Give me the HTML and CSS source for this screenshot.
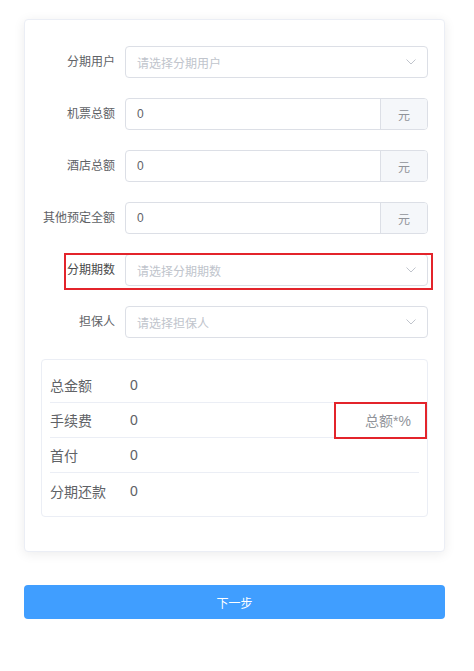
FILE: index.html
```html
<!DOCTYPE html>
<html lang="zh">
<head>
<meta charset="utf-8">
<title>分期</title>
<link rel="stylesheet" href="styles.css">
</head>
<body>
<div class="page">
  <div class="card">
    <div class="form">
      <div class="form-item">
        <label class="label">分期用户</label>
        <div class="select">
          <span class="placeholder">请选择分期用户</span>
          <svg class="arrow" width="10" height="6" viewBox="0 0 10 6"><polyline points="0.5,0.5 5,5 9.5,0.5" fill="none" stroke="#c0c4cc" stroke-width="1"/></svg>
        </div>
      </div>
      <div class="form-item">
        <label class="label">机票总额</label>
        <div class="input-group">
          <span class="value">0</span>
          <span class="append">元</span>
        </div>
      </div>
      <div class="form-item">
        <label class="label">酒店总额</label>
        <div class="input-group">
          <span class="value">0</span>
          <span class="append">元</span>
        </div>
      </div>
      <div class="form-item">
        <label class="label">其他预定全额</label>
        <div class="input-group">
          <span class="value">0</span>
          <span class="append">元</span>
        </div>
      </div>
      <div class="form-item">
        <label class="label label-dark">分期期数</label>
        <div class="select">
          <span class="placeholder">请选择分期期数</span>
          <svg class="arrow" width="10" height="6" viewBox="0 0 10 6"><polyline points="0.5,0.5 5,5 9.5,0.5" fill="none" stroke="#c0c4cc" stroke-width="1"/></svg>
        </div>
        <div class="mark mark-form"></div>
      </div>
      <div class="form-item">
        <label class="label">担保人</label>
        <div class="select">
          <span class="placeholder">请选择担保人</span>
          <svg class="arrow" width="10" height="6" viewBox="0 0 10 6"><polyline points="0.5,0.5 5,5 9.5,0.5" fill="none" stroke="#c0c4cc" stroke-width="1"/></svg>
        </div>
      </div>
    </div>
    <div class="summary">
      <div class="row">
        <span class="s-label">总金额</span>
        <span class="s-value">0</span>
      </div>
      <div class="row">
        <span class="s-label">手续费</span>
        <span class="s-value">0</span>
        <span class="s-note">总额*%</span>
        <div class="mark mark-note"></div>
      </div>
      <div class="row">
        <span class="s-label">首付</span>
        <span class="s-value">0</span>
      </div>
      <div class="row">
        <span class="s-label">分期还款</span>
        <span class="s-value">0</span>
      </div>
    </div>
  </div>
  <button class="btn">下一步</button>
</div>
</body>
</html>
```

FILE: styles.css
```css
* { box-sizing: border-box; }
html, body { margin: 0; padding: 0; background: #fff; }
body {
  font-family: "Liberation Sans", "Noto Sans CJK SC", sans-serif;
  color: #606266;
}
.page {
  padding: 19px 29px 0 24px;
}
.card {
  border: 1px solid #ebeef5;
  border-radius: 4px;
  background: #fff;
  box-shadow: 0 2px 12px 0 rgba(0, 0, 0, 0.08);
  padding: 26px 16px 34px 16px;
}
.form {
  display: flex;
  flex-direction: column;
  gap: 20px;
}
.form-item {
  position: relative;
  display: flex;
  align-items: center;
  height: 32px;
}
.label {
  width: 84px;
  flex: none;
  text-align: right;
  padding-right: 10px;
  font-size: 12px;
  color: #606266;
  line-height: 32px;
  white-space: nowrap;
}
.label-dark { color: #4a4a4a; }
.select, .input-group {
  flex: 1;
  height: 32px;
  border: 1px solid #dcdfe6;
  border-radius: 4px;
  display: flex;
  align-items: center;
  font-size: 12px;
  overflow: hidden;
}
.select {
  padding: 0 11px 0 11px;
  justify-content: space-between;
}
.placeholder { color: #c0c4cc; }
.value {
  flex: 1;
  padding-left: 11px;
  color: #606266;
}
.append {
  width: 47px;
  height: 100%;
  background: #f5f7fa;
  border-left: 1px solid #dcdfe6;
  color: #909399;
  display: flex;
  align-items: center;
  justify-content: center;
}
.mark {
  position: absolute;
  border: 2px solid #e3242b;
  pointer-events: none;
}
.mark-form {
  top: -1px;
  left: 23px;
  right: -5px;
  height: 37px;
}
.summary {
  margin-top: 21px;
  border: 1px solid #ebeef5;
  border-radius: 4px;
  padding: 8px;
}
.row {
  position: relative;
  display: flex;
  align-items: center;
  height: 35px;
  border-bottom: 1px solid #ebeef5;
  font-size: 14px;
}
.row:last-child { border-bottom: none; height: 35px; }
.s-label { width: 80px; color: #606266; }
.s-value { flex: 1; color: #606266; }
.s-note { color: #909399; padding-right: 8px; }
.mark-note {
  top: -1px;
  right: -8px;
  width: 93px;
  height: 37px;
}
.btn {
  display: block;
  width: 100%;
  margin-top: 33px;
  height: 34px;
  border: none;
  border-radius: 4px;
  background: #409eff;
  color: #fff;
  font-family: "Liberation Sans", "Noto Sans CJK SC", sans-serif;
  font-size: 12px;
}
```
